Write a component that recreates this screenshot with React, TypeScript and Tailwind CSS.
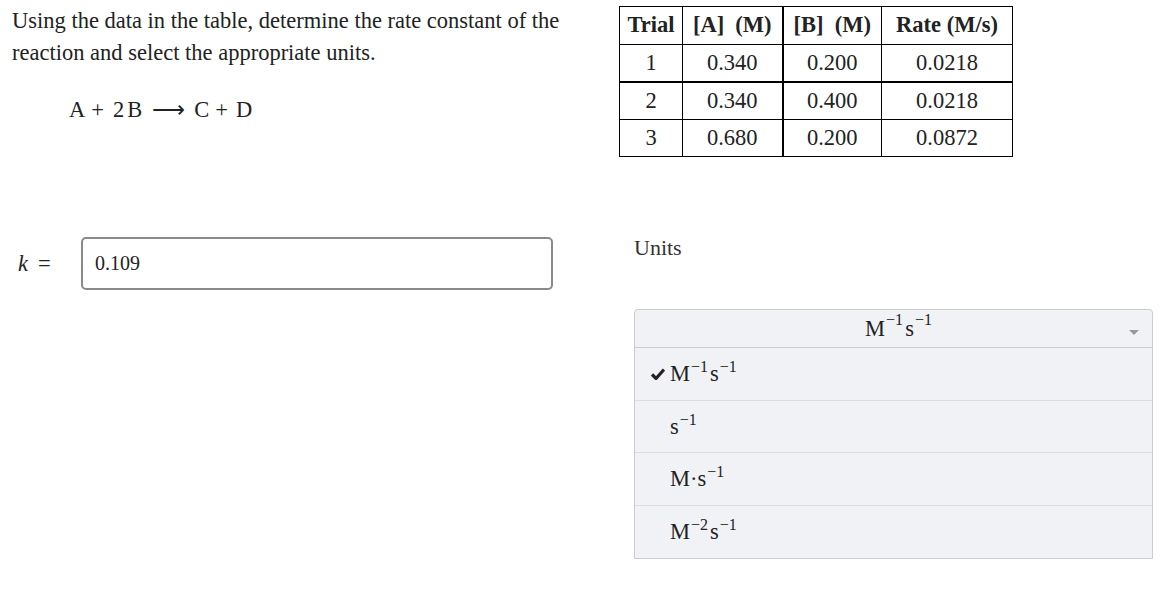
import React from "react";

/* =========================================================
   DATA
========================================================= */

const rows = [
  { trial: "1", a: "0.340", b: "0.200", rate: "0.0218" },
  { trial: "2", a: "0.340", b: "0.400", rate: "0.0218" },
  { trial: "3", a: "0.680", b: "0.200", rate: "0.0872" },
];

type Unit = { key: string; label: React.ReactNode };

const Sup = ({ children }: { children: React.ReactNode }) => (
  <span className="relative top-[-9px] ml-[1px] mr-[2px] text-[16px] leading-none">{children}</span>
);

const units: Unit[] = [
  {
    key: "m1s1",
    label: (
      <>
        M<Sup>−1</Sup>s<Sup>−1</Sup>
      </>
    ),
  },
  {
    key: "s1",
    label: (
      <>
        s<Sup>−1</Sup>
      </>
    ),
  },
  {
    key: "ms1",
    label: (
      <>
        M·s<Sup>−1</Sup>
      </>
    ),
  },
  {
    key: "m2s1",
    label: (
      <>
        M<Sup>−2</Sup>s<Sup>−1</Sup>
      </>
    ),
  },
];

/* =========================================================
   COMPONENT
========================================================= */

export default function App() {
  const selected = "m1s1";

  return (
    <main className="flex h-[602px] w-[1173px] bg-white font-['Liberation_Serif',serif] text-[#222]">
      {/* LEFT: question + answer */}

      <section className="flex w-[619px] flex-col pl-3 pt-[5px]">
        <p className="w-[570px] text-[22.5px] leading-[32px]">
          Using the data in the table, determine the rate constant of the
          reaction and select the appropriate units.
        </p>

        <div className="mt-[25px] flex items-center pl-[57px] text-[22.5px] leading-[32px]">
          <span>A</span>
          <span className="ml-[6px]">+</span>
          <span className="ml-[9px]">2</span>
          <span className="ml-[3px]">B</span>
          <span className="ml-[10px] w-[32px] text-center">⟶</span>
          <span className="ml-[10px]">C</span>
          <span className="ml-[6px]">+</span>
          <span className="ml-[8px]">D</span>
        </div>

        <div className="mt-[111px] flex items-center">
          <span className="flex w-[69px] pl-[6px] text-[22.5px]">
            <i>k</i>
            <span className="ml-[10px]">=</span>
          </span>
          <input
            defaultValue="0.109"
            className="h-[53px] w-[472px] rounded-[5px] border-2 border-[#8a8a8a] px-3 font-['Liberation_Serif',serif] text-[20px] text-[#222] outline-none"
          />
        </div>
      </section>

      {/* RIGHT: table + units */}

      <section className="flex flex-col items-start pt-[6px]">
        <table className="w-[393px] table-fixed border-collapse text-center text-[22.5px]">
          <colgroup>
            <col className="w-[63px]" />
            <col className="w-[100px]" />
            <col className="w-[99px]" />
            <col className="w-[131px]" />
          </colgroup>
          <thead>
            <tr className="h-[38px]">
              <th className="border border-black pb-[2px]">Trial</th>
              <th className="border border-black pb-[2px] whitespace-nowrap">[A]&nbsp; (M)</th>
              <th className="border border-black border-l-2 pb-[2px] whitespace-nowrap">[B]&nbsp; (M)</th>
              <th className="border border-black pb-[2px] whitespace-nowrap">Rate (M/s)</th>
            </tr>
          </thead>
          <tbody>
            {rows.map((r, i) => (
              <tr key={r.trial} className={i === 1 ? "h-[38px] border-t-2 border-black" : "h-[37px]"}>
                <td className="border border-black">{r.trial}</td>
                <td className="border border-black">{r.a}</td>
                <td className="border border-black border-l-2">{r.b}</td>
                <td className="border border-black">{r.rate}</td>
              </tr>
            ))}
          </tbody>
        </table>

        <div className="mt-[74px] pl-[15px] text-[22px] text-[#333]">Units</div>

        {/* UNITS DROPDOWN */}

        <div className="ml-[15px] mt-[45px] w-[519px] rounded-t-[4px] border border-[#ccc] bg-[#f1f2f6]">
          <div className="relative flex h-[38px] items-center justify-center border-b border-[#ccc] pl-[12px] text-[22.5px]">
            {units[0].label}
            <span className="absolute right-[13px] top-[20px] h-0 w-0 border-x-[5px] border-t-[5px] border-x-transparent border-t-[#999]" />
          </div>

          {units.map((u, i) => (
            <div
              key={u.key}
              className={
                "flex h-[52.5px] items-center pt-[1px] text-[22.5px] " +
                (i < units.length - 1 ? "border-b border-[#ddd]" : "")
              }
            >
              <span className="flex w-[35px] justify-end pr-[5px]">
                {u.key === selected && (
                  <svg width="14" height="12" viewBox="0 0 14 12">
                    <path d="M1 6.5 L5 10.5 L13 1.5" fill="none" stroke="#222" strokeWidth="3.2" />
                  </svg>
                )}
              </span>
              <span>{u.label}</span>
            </div>
          ))}
        </div>
      </section>
    </main>
  );
}
